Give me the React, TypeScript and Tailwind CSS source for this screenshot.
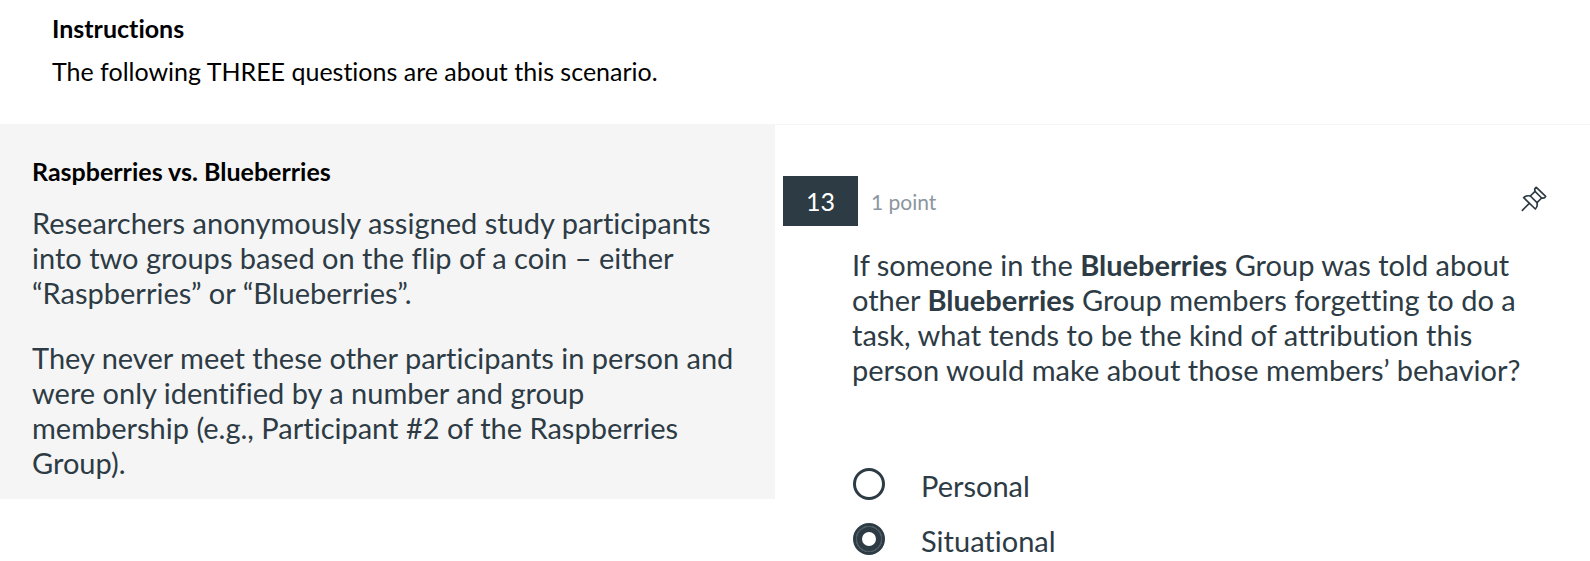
const scenario = [
  'Researchers anonymously assigned study participants into two groups based on the flip of a coin – either “Raspberries” or “Blueberries”.',
  'They never meet these other participants in person and were only identified by a number and group membership (e.g., Participant #2 of the Raspberries Group).',
];

const options = ['Personal', 'Situational'];

function PinIcon() {
  return (
    <svg viewBox="0 0 78 78" className="h-[26px] w-[26px]" fill="none" stroke="currentColor" strokeWidth="5" strokeLinejoin="round" strokeLinecap="round" aria-hidden="true">
      <path d="M46 4 L74 31 Q71 38 62 36 L42 16 Q39 8 46 4 Z" />
      <path d="M42 16 L28 30 Q16 27 8 35 L43 69 Q51 60 48 50 L62 36" />
      <path d="M28 30 L48 50 M25 52 L4 73" />
    </svg>
  );
}

export default function App() {
  return (
    <main className="min-h-screen bg-white font-['Lato',sans-serif] text-[#2d3b45] [font-variant-ligatures:none]">
      <header className="px-[52px] pt-[13px] pb-[37px] text-[25px] text-black">
        <h1 className="leading-[30px] font-bold">Instructions</h1>
        <p className="mt-3 leading-8">The following THREE questions are about this scenario.</p>
      </header>

      <div className="flex items-start">
        <section className="w-[775px] shrink-0 bg-[#f5f5f5] px-8 pt-[31px] pb-[19px]">
          <h2 className="text-[25px] leading-8 font-bold text-black">Raspberries vs. Blueberries</h2>
          <div className="mt-[18px] space-y-[30px] text-[29px] leading-[35px]">
            {scenario.map((text) => (
              <p key={text}>{text}</p>
            ))}
          </div>
        </section>

        <section className="min-w-0 flex-1 border-t border-[#f5f5f5] pt-[51px] pl-2">
          <div className="flex items-center">
            <span className="flex h-[50px] w-[75px] items-center justify-center bg-[#2d3b45] pt-px text-[25px] text-white">13</span>
            <span className="ml-[13px] pt-px text-[21px] text-[#8b969e]">1 point</span>
            <button type="button" aria-label="Pin question" className="mr-[43px] mb-1 ml-auto">
              <PinIcon />
            </button>
          </div>

          <fieldset className="pt-[21px] pr-[60px] pl-[69px]">
            <legend className="float-left text-[29px] leading-[35px]">
              If someone in the <strong>Blueberries</strong> Group was told about other <strong>Blueberries</strong> Group
              members forgetting to do a task, what tends to be the kind of attribution this person would make about those
              members’ behavior?
            </legend>
            <div className="clear-both space-y-[19px] pt-[81px] pl-px">
              {options.map((option) => (
                <label key={option} className="flex items-start text-[29px] leading-9">
                  <input
                    type="radio"
                    name="attribution"
                    defaultChecked={option === 'Situational'}
                    className="mr-9 size-8 appearance-none rounded-full border-[3px] border-[#2d3b45] checked:shadow-[inset_0_0_0_1px_#56626a,inset_0_0_0_6px_#2d3b45]"
                  />
                  {option}
                </label>
              ))}
            </div>
          </fieldset>
        </section>
      </div>
    </main>
  );
}
